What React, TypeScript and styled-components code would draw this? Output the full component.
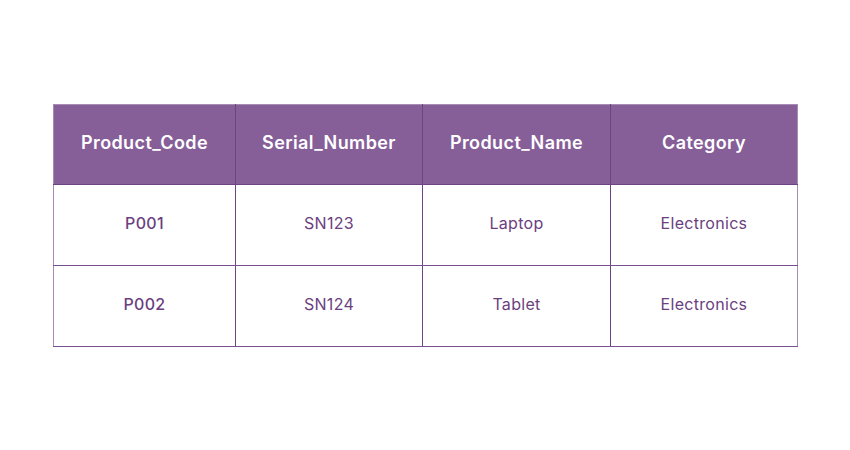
import styled, { createGlobalStyle } from 'styled-components';

const GlobalStyle = createGlobalStyle`
	html, body {
		margin: 0;
		padding: 0;
		background: #ffffff;
	}
	body {
		font-family: 'Inter', 'Open Sans', sans-serif;
	}
`;

const Page = styled.div`
	width: 850px;
	height: 450px;
	padding: 104px 0 0 53px;
	box-sizing: border-box;
`;

const Table = styled.table`
	border-collapse: collapse;
	width: 744px;
	table-layout: fixed;
	border: 1px solid #a88cb6;
`;

const HeadCell = styled.th`
	height: 74px;
	padding: 0 0 5px;
	background: #865e98;
	color: #ffffff;
	font-size: 18px;
	font-weight: 600;
	letter-spacing: 0.4px;
	text-align: center;
	border-left: 1px solid #6d4382;
	border-bottom: 1px solid #6d4382;

	&:first-child {
		border-left: 1px solid #a88cb6;
	}
`;

const Cell = styled.td<{ $strong?: boolean }>`
	height: 76px;
	padding: 0 0 4px;
	text-align: center;
	color: #6b3f80;
	font-size: 16px;
	font-weight: ${(p) => (p.$strong ? 500 : 400)};
	letter-spacing: 0.3px;
	border-left: 1px solid #6d4382;
	border-bottom: 1px solid #7a5190;

	&:first-child {
		border-left: 1px solid #a88cb6;
	}
`;

const columns = [
	{ name: 'Product_Code', width: 182 },
	{ name: 'Serial_Number', width: 187 },
	{ name: 'Product_Name', width: 188 },
	{ name: 'Category', width: 187 }
];

const rows = [
	['P001', 'SN123', 'Laptop', 'Electronics'],
	['P002', 'SN124', 'Tablet', 'Electronics']
];

export default function App() {
	return (
		<>
			<GlobalStyle />
			<Page>
				<Table>
					<colgroup>
						{columns.map((c) => (
							<col key={c.name} style={{ width: c.width }} />
						))}
					</colgroup>
					<thead>
						<tr>
							{columns.map((c) => (
								<HeadCell key={c.name}>{c.name}</HeadCell>
							))}
						</tr>
					</thead>
					<tbody>
						{rows.map((r) => (
							<tr key={r[0]}>
								{r.map((v, i) => (
									<Cell key={i} $strong={i === 0}>
										{v}
									</Cell>
								))}
							</tr>
						))}
					</tbody>
				</Table>
			</Page>
		</>
	);
}
